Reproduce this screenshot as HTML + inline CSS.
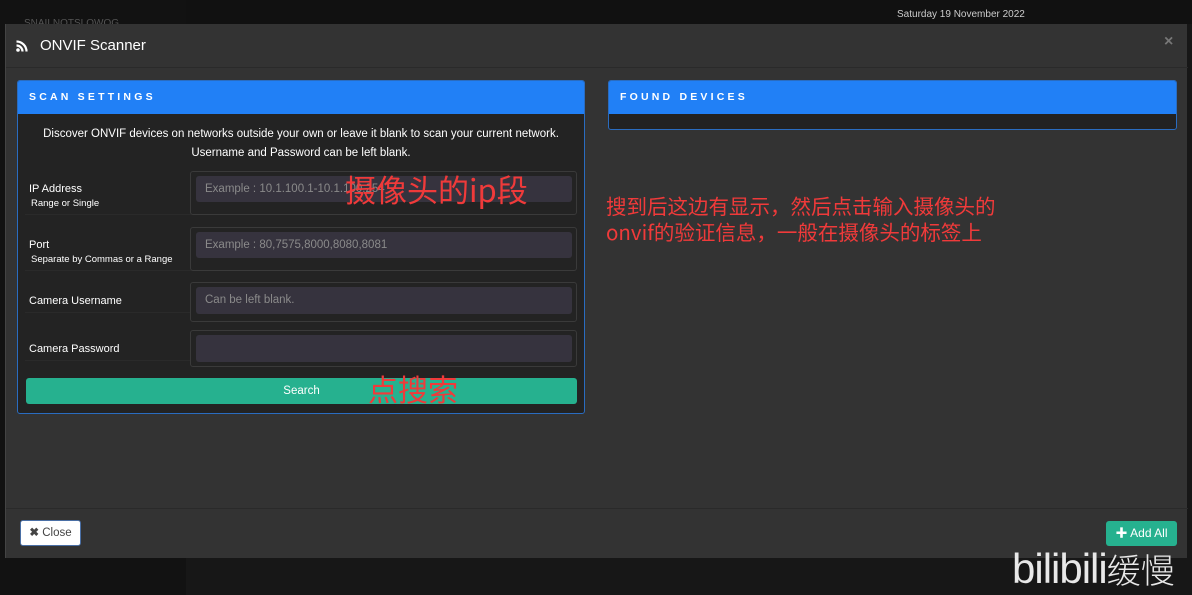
<!DOCTYPE html>
<html><head><meta charset="utf-8">
<style>
*{margin:0;padding:0;box-sizing:border-box}
body{width:1192px;height:595px;background:#171717;position:relative;overflow:hidden;font-family:"Liberation Sans","Noto Sans CJK SC",sans-serif;color:#fff}
.a{position:absolute}
.side{left:0;top:0;width:186px;height:595px;background:#121212}
.top{left:186px;top:0;width:1006px;height:24px;background:#111}
.modal{left:5px;top:24px;width:1182px;height:534px;background:#333;border-left:1px solid #444}
.hl{height:1px;background:#2a2a2a}
.ph{background:#2180f6;color:#fff;font-size:10.5px;letter-spacing:3.2px;padding-left:11px;line-height:33px;font-weight:bold}
.lab{font-size:11px;color:#fff}
.sub{font-size:9.5px;color:#fff}
.box{border:1px solid #3a3a3a;border-radius:3px;background:#232323}
.inp{background:#36333e;border-radius:3px;color:#8a8a8a;font-size:11.5px;line-height:26px;padding-left:9px}
.red{color:#f03a3a;font-family:"Noto Sans CJK SC",sans-serif}
</style></head><body>
<div class="a side"></div>
<div class="a top"></div>
<div class="a" style="left:24px;top:18px;font-size:10px;color:#555">SNAILNOTSLOWQG</div>
<div class="a" style="left:897px;top:9px;font-size:10px;color:#ccc">Saturday 19 November 2022</div>
<div class="a modal">
  <svg class="a" style="left:10px;top:16px" width="12" height="12" viewBox="0 0 12 12"><circle cx="2" cy="10" r="1.8" fill="#fff"/><path d="M0.5 5.5a6 6 0 0 1 6 6M0.5 1.5a10 10 0 0 1 10 10" stroke="#fff" stroke-width="2.2" fill="none"/></svg>
  <div class="a" style="left:34px;top:13px;font-size:15px">ONVIF Scanner</div>
  <div class="a" style="left:1158px;top:9px;font-size:16px;color:#777;font-weight:bold">×</div>
  <div class="a hl" style="left:0;top:43px;width:1182px"></div>
  <div class="a" style="left:11px;top:56px;width:568px;height:334px;border:1px solid #2a6cc0;border-radius:3px;background:#232323;overflow:hidden">
    <div class="ph">SCAN SETTINGS</div>
    <div style="text-align:center;font-size:11.5px;line-height:19px;margin-top:11px">Discover ONVIF devices on networks outside your own or leave it blank to scan your current network.<br>Username and Password can be left blank.</div>
  </div>
  <div class="a lab" style="left:23px;top:159px">IP Address</div>
  <div class="a sub" style="left:25px;top:174px">Range or Single</div>
  <div class="a hl" style="left:19px;top:190px;width:166px"></div>
  <div class="a box" style="left:184px;top:147px;width:387px;height:44px"></div>
  <div class="a inp" style="left:190px;top:152px;width:376px;height:26px">Example : 10.1.100.1-10.1.100.254</div>

  <div class="a lab" style="left:23px;top:215px">Port</div>
  <div class="a sub" style="left:25px;top:230px">Separate by Commas or a Range</div>
  <div class="a hl" style="left:19px;top:246px;width:166px"></div>
  <div class="a box" style="left:184px;top:203px;width:387px;height:44px"></div>
  <div class="a inp" style="left:190px;top:208px;width:376px;height:26px">Example : 80,7575,8000,8080,8081</div>

  <div class="a lab" style="left:23px;top:271px">Camera Username</div>
  <div class="a hl" style="left:19px;top:288px;width:166px"></div>
  <div class="a box" style="left:184px;top:258px;width:387px;height:40px"></div>
  <div class="a inp" style="left:190px;top:263px;width:376px;height:27px">Can be left blank.</div>

  <div class="a lab" style="left:23px;top:319px">Camera Password</div>
  <div class="a hl" style="left:19px;top:336px;width:166px"></div>
  <div class="a box" style="left:184px;top:306px;width:387px;height:37px"></div>
  <div class="a inp" style="left:190px;top:311px;width:376px;height:27px"></div>

  <div class="a" style="left:20px;top:354px;width:551px;height:26px;background:#26b18f;border-radius:3px;text-align:center;font-size:11.5px;line-height:26px">Search</div>

  <div class="a" style="left:602px;top:56px;width:569px;height:50px;border:1px solid #2a6cc0;border-radius:3px;background:#222;overflow:hidden">
    <div class="ph">FOUND DEVICES</div>
  </div>

  <div class="a hl" style="left:0;top:484px;width:1182px;background:#2a2a2a"></div>
  <div class="a" style="left:14px;top:496px;width:61px;height:26px;background:#fff;border:1px solid #4a6fa5;border-radius:3px;color:#444;font-size:11.5px;line-height:24px;text-align:center"><b>✖</b> Close</div>
  <div class="a" style="left:1100px;top:497px;width:71px;height:25px;background:#26b18f;border-radius:3px;font-size:12px;line-height:25px;text-align:center"><b>✚</b> Add All</div>

  <div class="a red" style="left:339px;top:147px;font-size:31px;line-height:36px">摄像头的ip段</div>
  <div class="a red" style="left:362px;top:346px;font-size:30px;line-height:36px">点搜索</div>
  <div class="a red" style="left:600px;top:168px;font-size:20.5px;line-height:26px">搜到后这边有显示，然后点击输入摄像头的<br>onvif的验证信息，一般在摄像头的标签上</div>
</div>
<div class="a" style="left:1012px;top:543px;font-size:42px;line-height:52px;color:#e8e8e8;font-family:'Liberation Sans Narrow','Liberation Sans','Noto Sans CJK SC',sans-serif;letter-spacing:-1px">bilibili<span style="font-size:34px;letter-spacing:0;font-family:'Noto Sans CJK SC',sans-serif;font-weight:300">缓慢</span></div>
</body></html>
